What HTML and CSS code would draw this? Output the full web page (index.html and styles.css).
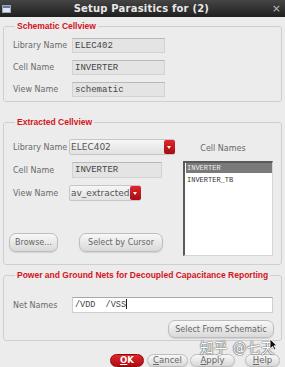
FILE: index.html
```html
<!DOCTYPE html>
<html lang="en">

<head>
    <meta charset="UTF-8">
    <meta name="viewport" content="width=device-width, initial-scale=1.0">
    <title>Setup Parasitics for (2)</title>
    <link rel="stylesheet" href="styles.css">
</head>

<body>
    <div class="window">
        <div class="titlebar">
            <svg class="app-icon" width="9" height="8" viewBox="0 0 9 8">
                <rect x="0.5" y="0.5" width="8" height="7" fill="#dfe6f0" stroke="#9aa8bb" />
                <rect x="1" y="1" width="7" height="2" fill="#5d7aa8" />
            </svg>
            <span class="title">Setup Parasitics for (2)</span>
            <span class="close">&#215;</span>
        </div>

        <div class="content">
            <fieldset class="group group-schematic">
                <legend>Schematic Cellview</legend>
                <div class="row">
                    <label>Library Name</label>
                    <div class="field readonly">ELEC402</div>
                </div>
                <div class="row">
                    <label>Cell Name</label>
                    <div class="field readonly">INVERTER</div>
                </div>
                <div class="row">
                    <label>View Name</label>
                    <div class="field readonly">schematic</div>
                </div>
            </fieldset>

            <fieldset class="group group-extracted">
                <legend>Extracted Cellview</legend>
                <div class="extracted">
                    <div class="extracted-left">
                        <div class="row row-lib">
                            <label>Library Name</label>
                            <div class="combo combo-lib">
                                <span class="combo-text">ELEC402</span>
                                <span class="combo-btn"></span>
                            </div>
                        </div>
                        <div class="row row-cell">
                            <label>Cell Name</label>
                            <div class="field readonly">INVERTER</div>
                        </div>
                        <div class="row row-view">
                            <label>View Name</label>
                            <div class="combo combo-view">
                                <span class="combo-text">av_extracted</span>
                                <span class="combo-btn"></span>
                            </div>
                        </div>
                        <div class="button-row">
                            <button class="btn btn-browse">Browse...</button>
                            <button class="btn btn-cursor">Select by Cursor</button>
                        </div>
                    </div>
                    <div class="extracted-right">
                        <div class="list-title">Cell Names</div>
                        <div class="listbox">
                            <div class="list-item selected">INVERTER</div>
                            <div class="list-item">INVERTER_TB</div>
                        </div>
                    </div>
                </div>
            </fieldset>

            <fieldset class="group group-nets">
                <legend>Power and Ground Nets for Decoupled Capacitance Reporting</legend>
                <div class="row row-nets">
                    <label>Net Names</label>
                    <div class="field editable">/VDD&nbsp;&nbsp;/VSS<span class="caret"></span></div>
                </div>
                <div class="nets-actions">
                    <button class="btn btn-schematic">Select From Schematic</button>
                </div>
            </fieldset>

            <div class="dialog-buttons">
                <button class="btn btn-ok"><u>O</u>K</button>
                <button class="btn btn-dlg btn-cancel"><u>C</u>ancel</button>
                <button class="btn btn-dlg btn-apply"><u>A</u>pply</button>
                <button class="btn btn-dlg btn-help"><u>H</u>elp</button>
            </div>
        </div>

        <div class="watermark">知乎 @七天</div>
        <svg class="pointer" width="9" height="13" viewBox="0 0 9 13">
            <path d="M1 1 L1 11 L3.5 8.5 L5.5 12 L7 11.3 L5 7.8 L8 7.8 Z" fill="#111" stroke="#fff" stroke-width="0.8" />
        </svg>
    </div>
</body>

</html>
```

FILE: styles.css
```css
body {
    margin: 0;
    padding: 0;
    background-color: #ececec;
    font-family: 'DejaVu Sans', 'Noto Sans CJK SC', sans-serif;
    color: #555;
    overflow: hidden;
}

.window {
    position: relative;
    width: 285px;
    height: 367px;
    overflow: hidden;
    background-color: #ececec;
}

/* title bar */
.titlebar {
    height: 17px;
    display: flex;
    align-items: center;
    padding: 0 4px 0 2px;
    background: linear-gradient(#454545, #1f1f1f);
    color: #e8e8e8;
}

.app-icon {
    flex: none;
}

.title {
    flex: 1;
    text-align: center;
    font-weight: bold;
    font-size: 10px;
    letter-spacing: 0.2px;
}

.close {
    font-size: 11px;
    color: #bbb;
}

/* groups */
.content {
    padding: 4px 3px 0 3px;
}

.group {
    margin: 0;
    padding: 0 8px 0 9px;
    border: 1px solid #cfcfcf;
    border-radius: 3px;
    min-width: 0;
}

.group legend {
    padding: 0 2px;
    margin-left: 2px;
    font-family: 'Liberation Sans', Arial, sans-serif;
    font-size: 8.5px;
    font-weight: bold;
    color: #d4131b;
    line-height: 10px;
    white-space: nowrap;
}

.group-schematic {
    padding-top: 7px;
    padding-bottom: 4px;
}

.group-extracted {
    margin-top: 15px;
    padding-top: 12px;
    padding-bottom: 8px;
}

.group-nets {
    margin-top: 5px;
    padding-top: 17px;
    padding-bottom: 2px;
}

.row {
    display: flex;
    align-items: center;
    height: 15px;
    margin-bottom: 7px;
}

.row:last-child {
    margin-bottom: 0;
}

.row label {
    width: 59px;
    flex: none;
    font-size: 8px;
    color: #6a6a6a;
    white-space: nowrap;
}

.field {
    height: 15px;
    box-sizing: border-box;
    padding: 0 2px;
    font-family: 'Liberation Mono', monospace;
    font-size: 9px;
    line-height: 14px;
    color: #444;
}

.field.readonly {
    width: 93px;
    background-color: #e4e4e4;
    border: 1px solid #d2d2d2;
    border-top-color: #b8b8b8;
}

.field.editable {
    flex: 1;
    background-color: #fff;
    border: 1px solid #cfcfcf;
    border-top-color: #a8a8a8;
}

.caret {
    display: inline-block;
    width: 1px;
    height: 10px;
    vertical-align: -2px;
    background-color: #222;
}

/* extracted cellview */
.extracted {
    display: flex;
}

.extracted-left {
    flex: none;
    width: 165px;
}

.row-lib {
    height: 16px;
}

.row-lib label,
.row-view label {
    width: 56px;
}

.row-cell {
    height: 16px;
}

.row-cell .field {
    width: 90px;
    height: 16px;
    line-height: 15px;
}

.row-view {
    height: 16px;
}

.combo {
    display: flex;
    align-items: center;
    height: 16px;
    box-sizing: border-box;
    background: linear-gradient(#f6f6f6, #e2e2e2);
    border: 1px solid #c6c6c6;
    border-radius: 2px;
    font-size: 9px;
    color: #555;
}

.combo-lib {
    width: 106px;
}

.combo-view {
    width: 72px;
}

.combo-text {
    flex: 1;
    padding-left: 1px;
    white-space: nowrap;
    overflow: hidden;
}

.combo-btn {
    position: relative;
    width: 11px;
    height: 14px;
    margin-right: -1px;
    border-radius: 2px;
    background: linear-gradient(#e0262c, #a50d12);
}

.combo-btn::after {
    content: "";
    position: absolute;
    left: 3px;
    top: 6px;
    border-left: 2.5px solid transparent;
    border-right: 2.5px solid transparent;
    border-top: 3px solid #fff;
}

.button-row {
    display: flex;
    gap: 21px;
    margin-top: 32px;
}

.btn {
    height: 19px;
    box-sizing: border-box;
    border: 1px solid #bdbdbd;
    border-radius: 7px;
    background: linear-gradient(#f8f8f8, #d9d9d9);
    box-shadow: 0 1px 1px rgba(0, 0, 0, 0.12);
    font-family: 'DejaVu Sans', sans-serif;
    font-size: 8px;
    color: #666;
    padding: 0;
}

.btn-browse {
    width: 49px;
    margin-left: -4px;
}

.btn-cursor {
    width: 84px;
}

.extracted-right {
    flex: 1;
    display: flex;
    flex-direction: column;
    padding-left: 5px;
}

.list-title {
    font-size: 8px;
    color: #666;
    text-align: center;
    height: 22px;
    line-height: 20px;
    padding-right: 10px;
}

.listbox {
    height: 95px;
    box-sizing: border-box;
    background-color: #fff;
    border: 1px solid #d6d6d6;
    border-left: 2px solid #5a5a5a;
    border-top: 2px solid #5a5a5a;
    padding: 0 0 0 1px;
    font-family: 'Liberation Mono', monospace;
    font-size: 7px;
    color: #333;
}

.list-item {
    height: 10px;
    line-height: 10px;
    padding-left: 1px;
}

.list-item.selected {
    background-color: #7a7a7a;
    color: #f0f0f0;
    margin-bottom: 2px;
}

/* nets */
.row-nets {
    height: 16px;
}

.row-nets .field {
    height: 16px;
    line-height: 15px;
    font-size: 8.5px;
}

.nets-actions {
    display: flex;
    justify-content: flex-end;
    margin-top: 7px;
    margin-right: -1px;
}

.btn-schematic {
    width: 106px;
    height: 18px;
}

/* dialog buttons */
.dialog-buttons {
    display: flex;
    justify-content: flex-end;
    margin-top: 13px;
    padding-right: 2px;
}

.btn-dlg {
    height: 13px;
    border-radius: 7px;
    font-size: 8.5px;
    line-height: 11px;
}

.btn-ok {
    width: 34px;
    height: 13px;
    border: 1px solid #8d0a0e;
    border-radius: 7px;
    background: linear-gradient(#e3262c, #ad0d12);
    color: #fff;
    font-weight: bold;
    font-size: 8.5px;
    line-height: 11px;
}

.btn-cancel {
    width: 41px;
    margin-left: 3px;
}

.btn-apply {
    width: 45px;
    margin-left: 2px;
}

.btn-help {
    width: 35px;
    margin-left: 10px;
}

/* overlays */
.watermark {
    position: absolute;
    left: 200px;
    top: 337px;
    font-size: 13.5px;
    color: #fff;
    letter-spacing: 0.5px;
    text-shadow: 0 0 1px #555, 0 0 1px #555, 0 0 2px #888;
}

.pointer {
    position: absolute;
    left: 269px;
    top: 338px;
}
```
